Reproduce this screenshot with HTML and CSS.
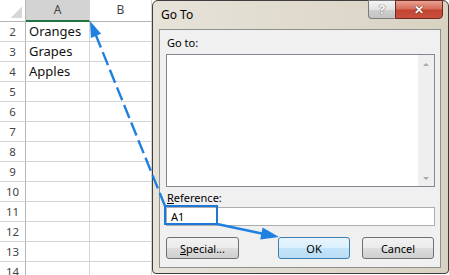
FILE: index.html
```html
<!DOCTYPE html>
<html lang="en">
<head>
  <meta charset="UTF-8">
  <title>Go To</title>
  <link rel="stylesheet" href="styles.css">
</head>
<body>

<div class="sheet">
  <div class="corner"></div>
  <div class="colhead selected">A</div>
  <div class="colhead">B</div>

  <div class="rowhead">2</div><div class="cell">Oranges</div><div class="cell"></div>
  <div class="rowhead">3</div><div class="cell">Grapes</div><div class="cell"></div>
  <div class="rowhead">4</div><div class="cell">Apples</div><div class="cell"></div>
  <div class="rowhead">5</div><div class="cell"></div><div class="cell"></div>
  <div class="rowhead">6</div><div class="cell"></div><div class="cell"></div>
  <div class="rowhead">7</div><div class="cell"></div><div class="cell"></div>
  <div class="rowhead">8</div><div class="cell"></div><div class="cell"></div>
  <div class="rowhead">9</div><div class="cell"></div><div class="cell"></div>
  <div class="rowhead">10</div><div class="cell"></div><div class="cell"></div>
  <div class="rowhead">11</div><div class="cell"></div><div class="cell"></div>
  <div class="rowhead">12</div><div class="cell"></div><div class="cell"></div>
  <div class="rowhead">13</div><div class="cell"></div><div class="cell"></div>
  <div class="rowhead">14</div><div class="cell"></div><div class="cell"></div>
</div>

<div class="dialog">
  <div class="titlebar">
    <span class="title">Go To</span>
    <div class="caption-btn help">?</div>
    <div class="caption-btn close">&#x2715;</div>
  </div>
  <div class="client">
    <div class="label">Go to:</div>
    <div class="listbox">
      <div class="scrollbar">
        <span class="arrow up"></span>
        <span class="arrow down"></span>
      </div>
    </div>
    <div class="label ref"><u>R</u>eference:</div>
    <div class="input">A1</div>
    <div class="buttons">
      <button class="btn"><u>S</u>pecial...</button>
      <button class="btn default">OK</button>
      <button class="btn">Cancel</button>
    </div>
  </div>
</div>

<!-- callout arrows drawn over the screenshot -->
<svg class="callouts" width="449" height="275" viewBox="0 0 449 275">
  <rect x="165" y="206" width="52" height="18" fill="none" stroke="#1f78d6" stroke-width="2"/>
  <line x1="165" y1="206" x2="95" y2="33" stroke="#1f80e0" stroke-width="2.4" stroke-dasharray="14 5"/>
  <polygon points="90,21 90.9,37.9 101.1,33.8" fill="#1f80e0"/>
  <line x1="217" y1="224" x2="264" y2="234" stroke="#1f80e0" stroke-width="2.4"/>
  <polygon points="279,237 260.2,239.4 262.6,227.4" fill="#1f80e0"/>
</svg>

</body>
</html>
```

FILE: styles.css
```css
body {
  margin: 0;
  width: 449px;
  height: 275px;
  overflow: hidden;
  position: relative;
  display: flex;
  background: #fff;
  font-family: 'Noto Sans', sans-serif;
}

.sheet {
  flex: none;
  width: 152px;
  display: grid;
  grid-template-columns: 26px 64px 62px;
  grid-template-rows: 22px;
  grid-auto-rows: 20px;
}

.corner, .colhead, .rowhead, .cell {
  box-sizing: border-box;
  border-right: 1px solid #d4d4d4;
  border-bottom: 1px solid #d4d4d4;
}

.corner {
  border-right-color: #b5b5b5;
  border-bottom-color: #b5b5b5;
  background: linear-gradient(to bottom right, transparent 50%, #d8d8d8 50%) no-repeat 10px 7px / 12px 11px;
}

.colhead {
  border-bottom-color: #b5b5b5;
  color: #444;
  font-size: 12px;
  line-height: 20px;
  text-align: center;
}

.colhead.selected {
  background: #d3d3d3;
  border-bottom: 2px solid #217346;
}

.rowhead {
  border-right-color: #b5b5b5;
  color: #444;
  font-size: 11.5px;
  line-height: 19px;
  text-align: center;
}

.cell {
  padding-left: 3px;
  font-size: 13px;
  line-height: 19px;
  color: #111;
}

.dialog {
  flex: none;
  box-sizing: border-box;
  width: 297px;
  height: 274px;
  border: 1px solid #3e3e3e;
  border-radius: 6px 6px 4px 4px;
  background: linear-gradient(to right, #e7e3d9, #d8d2c2);
  padding: 0 7px 5px 6px;
  display: flex;
  flex-direction: column;
  font-size: 11px;
  color: #000;
}

.titlebar {
  height: 28px;
  display: flex;
  align-items: flex-start;
}

.title {
  margin: 6px 0 0 2px;
  font-size: 12px;
  line-height: 16px;
  flex: 1;
}

.caption-btn {
  box-sizing: border-box;
  height: 19px;
  margin-top: -1px;
  text-align: center;
  line-height: 17px;
  font-weight: bold;
}

.help {
  width: 27px;
  border: 1px solid #7b7b7b;
  border-right: none;
  border-radius: 0 0 0 4px;
  background: linear-gradient(#f4f4f4, #e2e2e2 50%, #cfcfcf 51%, #c4c4c4);
  color: #fff;
  font-size: 13px;
  text-shadow: 0 0 1px #555, 0 0 1px #555;
}

.close {
  width: 48px;
  margin-right: -2px;
  border: 1px solid #6b2a22;
  border-radius: 0 0 4px 0;
  background: linear-gradient(#e8a293, #d56b58 48%, #c34432 52%, #c9503d);
  color: #fff;
  font-size: 12px;
  text-shadow: 0 0 1px #5a1a12, 0 0 1px #5a1a12;
}

.client {
  flex: 1;
  border: 1px solid #8e8f8f;
  background: #f0f0f0;
  padding: 0 5px 0 6px;
  display: flex;
  flex-direction: column;
}

.label {
  height: 24px;
  line-height: 25px;
  padding-left: 1px;
}

.label.ref {
  height: 20px;
  line-height: 22px;
}

.listbox {
  box-sizing: border-box;
  height: 133px;
  border: 1px solid #828790;
  background: #fff;
  display: flex;
  justify-content: flex-end;
}

.scrollbar {
  width: 16px;
  background: #efefef;
  display: flex;
  flex-direction: column;
  align-items: center;
  justify-content: space-between;
  padding: 8px 0 6px;
}

.arrow {
  width: 0;
  height: 0;
  border-left: 3px solid transparent;
  border-right: 3px solid transparent;
}

.arrow.up { border-bottom: 3px solid #a8a8a8; }
.arrow.down { border-top: 3px solid #a8a8a8; }

.input {
  box-sizing: border-box;
  height: 19px;
  border: 1px solid #abadb3;
  background: #fff;
  padding-left: 4px;
  line-height: 17px;
}

.buttons {
  display: flex;
  gap: 12px;
  margin-top: 11px;
  padding-right: 1px;
}

.btn {
  box-sizing: border-box;
  width: 73px;
  height: 22px;
  border: 1px solid #707070;
  border-radius: 3px;
  background: linear-gradient(#f2f2f2, #ebebeb 50%, #dddddd 51%, #cfcfcf);
  font-family: 'Noto Sans', sans-serif;
  font-size: 11px;
  color: #000;
  padding: 0;
}

.btn.default {
  margin-left: auto;
  width: 72px;
  border-color: #3c7fb1;
  background: linear-gradient(#e8f5fd, #d9effc 50%, #c4e4f8 51%, #b9ddf5);
}

.btn:last-child { width: 72px; }

.callouts {
  position: absolute;
  left: 0;
  top: 0;
  pointer-events: none;
}
```
